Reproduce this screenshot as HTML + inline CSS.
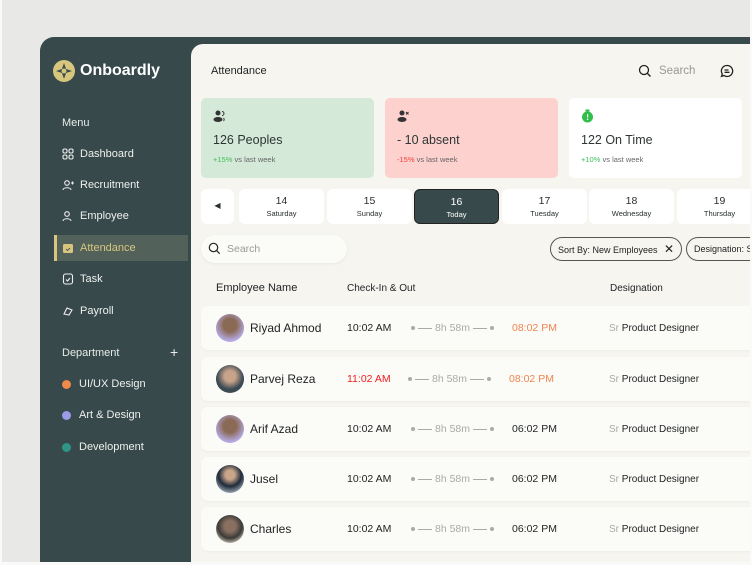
<!DOCTYPE html>
<html><head><meta charset="utf-8"><style>
*{margin:0;padding:0;box-sizing:border-box}
body{width:752px;height:565px;overflow:hidden;background:#e8e9e6;font-family:"Liberation Sans",sans-serif;position:relative}
.a{position:absolute}
.frame{left:40px;top:37px;width:720px;height:525px;background:#37494b;border-radius:14px 0 0 0;overflow:hidden}
.main{left:191px;top:44px;width:570px;height:518px;background:#f6f5f0;border-radius:12px 0 0 0}
.side{color:#e9ece9;font-size:11px}
.nav{left:62px;font-size:11px;color:#eef0ee;display:flex;align-items:center;gap:6px}
.card{top:98px;width:173px;height:80px;border-radius:5px}
.card .t{position:absolute;left:12px;top:35px;font-size:12.5px;color:#2d3535}
.card .s{position:absolute;left:12px;top:57px;font-size:7.5px;color:#666}
.day{top:189px;height:35px;background:#fff;border-radius:6px;text-align:center;color:#2a2f2f}
.day b{display:block;font-weight:normal;font-size:10.5px;margin-top:6px}
.day span{display:block;font-size:7.5px;margin-top:2px}
.row{left:201px;width:560px;height:44px;background:#fbfbf8;border-radius:7px;box-shadow:0 1px 2px rgba(0,0,0,.04)}
.row .av{position:absolute;left:15px;top:8px;width:28px;height:28px;border-radius:50%}
.row .n{position:absolute;left:49px;top:15px;font-size:12px;color:#1e2222}
.row .i{position:absolute;left:146px;top:16px;font-size:10.5px;color:#1e2222}
.row .d{position:absolute;left:210px;top:16px;font-size:10.5px;color:#aaa;display:flex;align-items:center;gap:3px}
.row .d s{display:inline-block;width:4px;height:4px;border-radius:50%;background:#aaa}
.row .d u{display:inline-block;width:14px;height:1px;background:#aaa}
.row .o{position:absolute;left:311px;top:16px;font-size:10.5px;color:#f0844f}
.row .g{position:absolute;left:408px;top:17px;font-size:10px;color:#1e2222}
.row .g i{font-style:normal;color:#aaa}
.pill{top:237px;height:24px;border:1px solid #555;border-radius:12px;font-size:9px;color:#222;line-height:22px;padding-left:7px}
</style></head><body>
<div class="a" style="left:0;top:0;width:2px;height:565px;background:#fafafa"></div>
<div class="a frame"></div>
<div class="a main"></div>
<svg class="a" style="left:53px;top:60px" width="22" height="22" viewBox="0 0 22 22"><circle cx="11" cy="11" r="11" fill="#d8c67e"/><path d="M11 3 L13 9 L19 11 L13 13 L11 19 L9 13 L3 11 L9 9Z" fill="#37494b"/><circle cx="11" cy="11" r="2.5" fill="#d8c67e"/></svg>
<div class="a" style="left:80px;top:62px;font-size:16px;color:#fff;font-weight:bold">Onboardly</div>
<div class="a side" style="left:62px;top:117px">Menu</div>
<div class="a nav" style="top:148px"><svg width="12" height="12" viewBox="0 0 12 12" fill="none" stroke="#eee" stroke-width="1.1"><rect x="1" y="1" width="4" height="4" rx="1.5"/><rect x="7" y="1" width="4" height="4" rx="1.5"/><rect x="1" y="7" width="4" height="4" rx="1.5"/><rect x="7" y="7" width="4" height="4" rx="1.5"/></svg>Dashboard</div>
<div class="a nav" style="top:179px"><svg width="12" height="12" viewBox="0 0 12 12" fill="none" stroke="#eee" stroke-width="1.1"><circle cx="5" cy="4" r="2.3"/><path d="M1 11c0-3 8-3 8 0M9 4h3M10.5 2.5v3"/></svg>Recruitment</div>
<div class="a nav" style="top:210px"><svg width="12" height="12" viewBox="0 0 12 12" fill="none" stroke="#eee" stroke-width="1.1"><circle cx="5" cy="4" r="2.3"/><path d="M1 11c0-3 8-3 8 0"/></svg>Employee</div>
<div class="a" style="left:54px;top:235px;width:134px;height:26px;background:#52615a;border-left:3px solid #d8c67e"></div>
<div class="a nav" style="top:242px;color:#d8c67e"><svg width="12" height="12" viewBox="0 0 12 12"><rect x="1" y="2" width="10" height="9" rx="1.5" fill="#d8c67e"/><path d="M4 7l1.5 1.5L8 6" stroke="#52615a" fill="none"/></svg>Attendance</div>
<div class="a nav" style="top:273px"><svg width="12" height="12" viewBox="0 0 12 12" fill="none" stroke="#eee" stroke-width="1.1"><rect x="1.5" y="1" width="9" height="10" rx="2"/><path d="M4 6.5l1.5 1.5L8 5"/></svg>Task</div>
<div class="a nav" style="top:305px"><svg width="12" height="12" viewBox="0 0 12 12" fill="none" stroke="#eee" stroke-width="1.1"><path d="M2 9l3-6 5 2-3 5z"/></svg>Payroll</div>
<div class="a side" style="left:62px;top:347px">Department</div>
<div class="a side" style="left:170px;top:344px;font-size:14px">+</div>
<div class="a nav" style="top:378px"><span style="width:9px;height:9px;border-radius:50%;background:#f08a4b;display:inline-block;margin-right:2px"></span>UI/UX Design</div>
<div class="a nav" style="top:409px"><span style="width:9px;height:9px;border-radius:50%;background:#9b9be8;display:inline-block;margin-right:2px"></span>Art &amp; Design</div>
<div class="a nav" style="top:441px"><span style="width:9px;height:9px;border-radius:50%;background:#2f9587;display:inline-block;margin-right:2px"></span>Development</div>
<div class="a" style="left:211px;top:65px;font-size:11px;color:#1e2222">Attendance</div>
<svg class="a" style="left:638px;top:64px" width="14" height="14" viewBox="0 0 14 14" fill="none" stroke="#222" stroke-width="1.3"><circle cx="6" cy="6" r="4.5"/><path d="M9.5 9.5l3 3"/></svg>
<div class="a" style="left:659px;top:65px;font-size:11.5px;color:#999">Search</div>
<svg class="a" style="left:720px;top:64px" width="14" height="14" viewBox="0 0 14 14" fill="none" stroke="#222" stroke-width="1.3"><path d="M7 1.5a5.5 5.5 0 1 1-3 10l-2.5.8.8-2.3A5.5 5.5 0 0 1 7 1.5z"/><path d="M4.5 6h4M4.5 8.3h5"/></svg>
<div class="a card" style="left:201px;background:#d4e9d8"><svg style="position:absolute;left:12px;top:12px" width="13" height="12" viewBox="0 0 13 12"><circle cx="5" cy="3" r="2.5" fill="#333"/><ellipse cx="5" cy="9.5" rx="4.5" ry="2.5" fill="#333"/><path d="M9 1.5a2 2 0 0 1 0 4M10.5 8a2 2 0 0 1 0 3" stroke="#333" fill="none"/></svg><div class="t">126 Peoples</div><div class="s"><span style="color:#3fbf5a">+15%</span> vs last week</div></div>
<div class="a card" style="left:385px;background:#fdd1ce"><svg style="position:absolute;left:12px;top:12px" width="13" height="12" viewBox="0 0 13 12"><circle cx="5" cy="3" r="2.5" fill="#333"/><ellipse cx="5" cy="9.5" rx="4.5" ry="2.5" fill="#333"/><path d="M9 2l2.5 2.5M11.5 2L9 4.5" stroke="#333"/></svg><div class="t">- 10 absent</div><div class="s"><span style="color:#f0403a">-15%</span> vs last week</div></div>
<div class="a card" style="left:569px;background:#fff"><svg style="position:absolute;left:12px;top:11px" width="13" height="14" viewBox="0 0 13 14"><circle cx="6.5" cy="8" r="5.5" fill="#2fbf4a"/><rect x="4.5" y="0.5" width="4" height="2" fill="#2fbf4a"/><rect x="6" y="5" width="1.2" height="3.5" fill="#fff"/><circle cx="6.6" cy="10.3" r=".8" fill="#fff"/></svg><div class="t">122 On Time</div><div class="s"><span style="color:#3fbf5a">+10%</span> vs last week</div></div>
<div class="a day" style="left:201px;width:33px"><b style="font-size:8px;margin-top:12px">◀</b></div>
<div class="a day" style="left:239px;width:85px"><b>14</b><span>Saturday</span></div>
<div class="a day" style="left:327px;width:85px"><b>15</b><span>Sunday</span></div>
<div class="a day" style="left:414px;width:85px;background:#37494b;color:#fff;border:1px solid #222"><b>16</b><span>Today</span></div>
<div class="a day" style="left:502px;width:85px"><b>17</b><span>Tuesday</span></div>
<div class="a day" style="left:589px;width:85px"><b>18</b><span>Wednesday</span></div>
<div class="a day" style="left:677px;width:85px"><b>19</b><span>Thursday</span></div>
<div class="a" style="left:201px;top:235px;width:146px;height:28px;background:#fbfbf8;border-radius:14px;box-shadow:0 1px 3px rgba(0,0,0,.06)"></div>
<svg class="a" style="left:208px;top:242px" width="13" height="13" viewBox="0 0 13 13" fill="none" stroke="#222" stroke-width="1.2"><circle cx="5.5" cy="5.5" r="4.2"/><path d="M8.7 8.7l3 3"/></svg>
<div class="a" style="left:227px;top:243px;font-size:10.5px;color:#999">Search</div>
<div class="a pill" style="left:550px;width:132px">Sort By: New Employees <span style="font-size:12px;margin-left:4px">✕</span></div>
<div class="a pill" style="left:686px;width:80px">Designation: S</div>
<div class="a" style="left:216px;top:282px;font-size:11px;color:#1e2222">Employee Name</div>
<div class="a" style="left:347px;top:283px;font-size:10px;color:#1e2222">Check-In &amp; Out</div>
<div class="a" style="left:610px;top:283px;font-size:10px;color:#1e2222">Designation</div>
<div class="a row" style="top:306px"><div class="av" style="background:radial-gradient(circle at 50% 40%,#8a6a55 30%,#b4a8e0 70%)"></div><div class="n">Riyad Ahmod</div><div class="i">10:02 AM</div><div class="d"><s></s><u></u>8h 58m<u></u><s></s></div><div class="o">08:02 PM</div><div class="g"><i>Sr</i> Product Designer</div></div>
<div class="a row" style="top:357px"><div class="av" style="background:radial-gradient(circle at 50% 40%,#c7a38a 25%,#3c4a54 60%)"></div><div class="n">Parvej Reza</div><div class="i" style="color:#f02020">11:02 AM</div><div class="d" style="left:207px"><s></s><u></u>8h 58m<u></u><s></s></div><div class="o" style="left:308px">08:02 PM</div><div class="g"><i>Sr</i> Product Designer</div></div>
<div class="a row" style="top:407px"><div class="av" style="background:radial-gradient(circle at 50% 40%,#8a6a55 30%,#b4a8e0 70%)"></div><div class="n">Arif Azad</div><div class="i">10:02 AM</div><div class="d"><s></s><u></u>8h 58m<u></u><s></s></div><div class="o" style="color:#1e2222">06:02 PM</div><div class="g"><i>Sr</i> Product Designer</div></div>
<div class="a row" style="top:457px"><div class="av" style="background:radial-gradient(circle at 50% 35%,#c9a58a 20%,#1e2a3a 50%,#9aa5b0 80%)"></div><div class="n">Jusel</div><div class="i">10:02 AM</div><div class="d"><s></s><u></u>8h 58m<u></u><s></s></div><div class="o" style="color:#1e2222">06:02 PM</div><div class="g"><i>Sr</i> Product Designer</div></div>
<div class="a row" style="top:507px"><div class="av" style="background:radial-gradient(circle at 50% 40%,#8a7060 25%,#3a3a38 55%,#c8c0b0 80%)"></div><div class="n">Charles</div><div class="i">10:02 AM</div><div class="d"><s></s><u></u>8h 58m<u></u><s></s></div><div class="o" style="color:#1e2222">06:02 PM</div><div class="g"><i>Sr</i> Product Designer</div></div>
<div class="a" style="left:0;top:562px;width:752px;height:3px;background:#fafafa"></div>
<div class="a" style="left:750px;top:0;width:2px;height:565px;background:#fafafa"></div>
</body></html>
